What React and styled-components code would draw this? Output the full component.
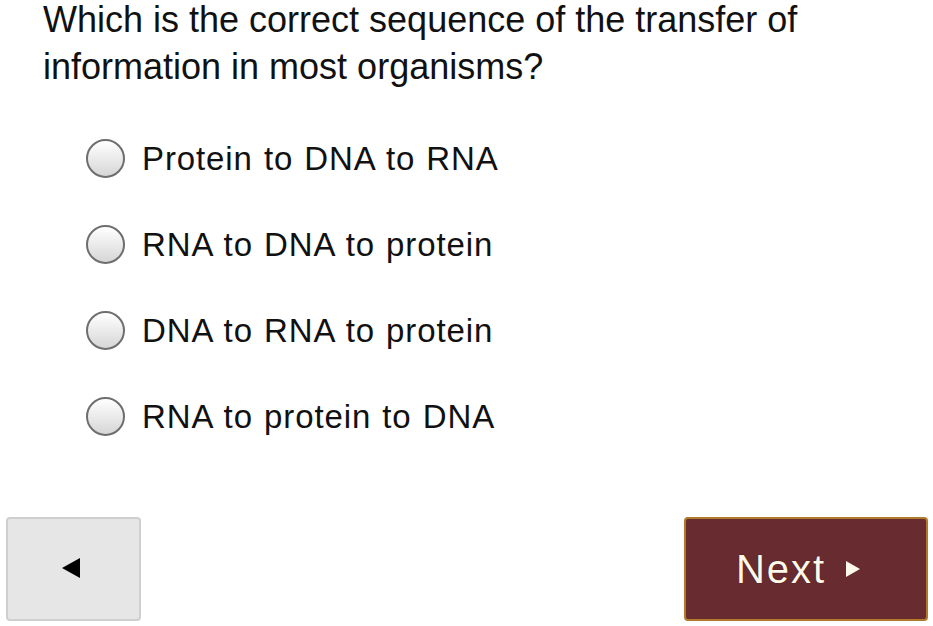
import styled, { createGlobalStyle } from 'styled-components'

const GlobalStyle = createGlobalStyle`
	body {
		margin: 0;
		background: #ffffff;
		font-family: 'Liberation Sans', Arial, sans-serif;
		color: #111111;
	}
`

const Page = styled.div`
	width: 933px;
	height: 626px;
	display: flex;
	flex-direction: column;
	overflow: hidden;
`

const Question = styled.p`
	margin: -4px 0 0;
	padding: 0 0 0 43px;
	font-size: 36px;
	line-height: 47px;
`

const Options = styled.ul`
	list-style: none;
	margin: 0;
	padding: 49px 0 0 86px;
	display: flex;
	flex-direction: column;
	gap: 48px;
`

const Option = styled.li`
	display: flex;
	align-items: center;
	gap: 17px;
	height: 38px;
	font-size: 33px;
	letter-spacing: 0.9px;
	word-spacing: 1px;
	line-height: 38px;
`

const Radio = styled.span`
	width: 35px;
	height: 35px;
	border-radius: 50%;
	border: 2px solid #6e6e6e;
	background: linear-gradient(#ffffff, #d6d6d6);
	flex: none;
`

const Label = styled.span`
	padding-top: 1px;
`

const Footer = styled.div`
	margin-top: auto;
	padding: 0 5px 5px 6px;
	display: flex;
	justify-content: space-between;
`

const BackButton = styled.button`
	width: 135px;
	height: 104px;
	background: #e6e6e6;
	border: 2px solid #cfcfcf;
	border-radius: 4px;
	display: flex;
	align-items: center;
	justify-content: center;
	padding: 0 5px 2px 0;
`

const NextButton = styled.button`
	width: 244px;
	height: 104px;
	background: #682b2f;
	border: 2px solid #b07a2a;
	border-radius: 4px;
	display: flex;
	align-items: center;
	justify-content: center;
	gap: 20px;
	padding: 0 16px 0 0;
	color: #fff9ea;
	font-family: 'Liberation Sans', Arial, sans-serif;
	font-size: 40px;
	letter-spacing: 2px;
	text-shadow: 0 0 1px #3a0f0f;
`

const Arrow = ({ width, height, left, color }) => (
	<svg width={width} height={height} viewBox={`0 0 ${width} ${height}`}>
		<polygon
			points={
				left
					? `${width},0 0,${height / 2} ${width},${height}`
					: `0,0 ${width},${height / 2} 0,${height}`
			}
			fill={color}
		/>
	</svg>
)

const options = [
	'Protein to DNA to RNA',
	'RNA to DNA to protein',
	'DNA to RNA to protein',
	'RNA to protein to DNA',
]

export default function App() {
	return (
		<>
			<GlobalStyle />
			<Page>
				<Question>
					Which is the correct sequence of the transfer of
					<br />
					information in most organisms?
				</Question>
				<Options>
					{options.map((text, index) => (
						<Option key={index}>
							<Radio />
							<Label>{text}</Label>
						</Option>
					))}
				</Options>
				<Footer>
					<BackButton aria-label='Back'>
						<Arrow width={18} height={20} left color='#000000' />
					</BackButton>
					<NextButton>
						Next
						<Arrow width={14} height={16} color='#fff9ea' />
					</NextButton>
				</Footer>
			</Page>
		</>
	)
}
